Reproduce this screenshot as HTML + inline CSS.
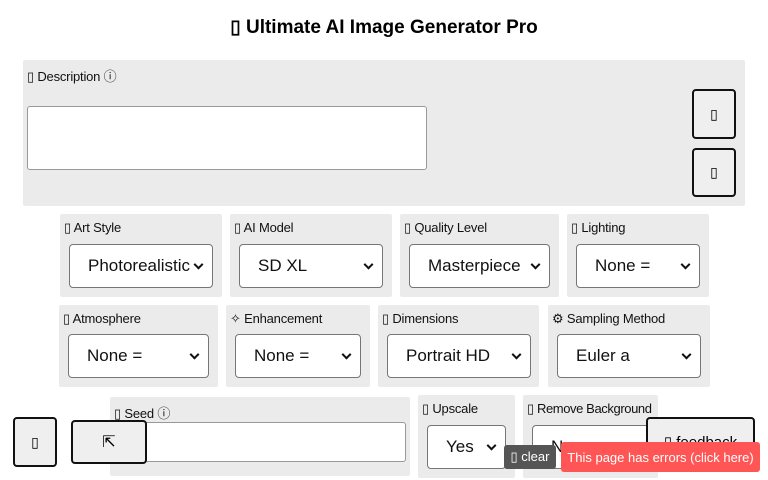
<!DOCTYPE html><html><head><style>
body{margin:0;width:768px;height:480px;overflow:hidden;background:#fff;font-family:"Liberation Sans",sans-serif;position:relative}
.a{position:absolute;box-sizing:border-box}
.p{background:#ebebeb;border-radius:2px}
.l{font-size:13px;color:#111;letter-spacing:-0.2px}
.s{background:#fff;border:1px solid #767676;border-radius:4px;font-size:17px;color:#111;display:flex;align-items:center;padding-left:18px;padding-right:30px;overflow:hidden;white-space:nowrap}
.s:after{content:"";position:absolute;right:10px;top:50%;width:5px;height:5px;border-right:2px solid #111;border-bottom:2px solid #111;transform:translateY(-70%) rotate(45deg)}
.b{background:#efefef;border:2px solid #111;border-radius:4px;display:flex;align-items:center;justify-content:center;font-size:14px}
</style></head><body>
<div class="a" style="left:0;top:16px;width:768px;text-align:center;font-size:19px;font-weight:bold">▯ Ultimate AI Image Generator Pro</div>
<div class="a p" style="left:23px;top:60px;width:722px;height:146px"></div>
<div class="a l" style="left:27px;top:66px">▯ Description ⓘ</div>
<div class="a" style="left:27px;top:106px;width:400px;height:64px;background:#fff;border:1px solid #999;border-radius:3px"></div>
<div class="a b" style="left:692px;top:89px;width:44px;height:50px">▯</div>
<div class="a b" style="left:692px;top:148px;width:44px;height:49px">▯</div>

<div class="a p" style="left:60px;top:214px;width:162px;height:83px"></div><div class="a l" style="left:64px;top:220px">▯ Art Style</div><div class="a s" style="left:69px;top:244px;width:144px;height:44px">Photorealistic</div>
<div class="a p" style="left:230px;top:214px;width:162px;height:83px"></div><div class="a l" style="left:234px;top:220px">▯ AI Model</div><div class="a s" style="left:239px;top:244px;width:144px;height:44px">SD XL</div>
<div class="a p" style="left:400px;top:214px;width:159px;height:83px"></div><div class="a l" style="left:404px;top:220px">▯ Quality Level</div><div class="a s" style="left:409px;top:244px;width:141px;height:44px">Masterpiece</div>
<div class="a p" style="left:567px;top:214px;width:142px;height:83px"></div><div class="a l" style="left:571px;top:220px">▯ Lighting</div><div class="a s" style="left:576px;top:244px;width:124px;height:44px">None =</div>

<div class="a p" style="left:59px;top:305px;width:159px;height:82px"></div><div class="a l" style="left:63px;top:311px">▯ Atmosphere</div><div class="a s" style="left:68px;top:334px;width:141px;height:44px">None =</div>
<div class="a p" style="left:226px;top:305px;width:144px;height:82px"></div><div class="a l" style="left:230px;top:311px">✧ Enhancement</div><div class="a s" style="left:235px;top:334px;width:126px;height:44px">None =</div>
<div class="a p" style="left:378px;top:305px;width:161px;height:82px"></div><div class="a l" style="left:382px;top:311px">▯ Dimensions</div><div class="a s" style="left:387px;top:334px;width:144px;height:44px">Portrait HD</div>
<div class="a p" style="left:548px;top:305px;width:162px;height:82px"></div><div class="a l" style="left:552px;top:311px">⚙ Sampling Method</div><div class="a s" style="left:557px;top:334px;width:144px;height:44px">Euler a</div>

<div class="a p" style="left:110px;top:397px;width:300px;height:79px"></div><div class="a l" style="left:114px;top:403px">▯ Seed ⓘ</div>
<div class="a" style="left:115px;top:422px;width:291px;height:40px;background:#fff;border:1px solid #999;border-radius:3px"></div>
<div class="a p" style="left:418px;top:395px;width:97px;height:83px"></div><div class="a l" style="left:422px;top:401px">▯ Upscale</div><div class="a s" style="left:427px;top:425px;width:79px;height:44px">Yes</div>
<div class="a p" style="left:523px;top:395px;width:135px;height:83px"></div><div class="a l" style="left:527px;top:401px;letter-spacing:-0.4px">▯ Remove Background</div><div class="a s" style="left:532px;top:425px;width:120px;height:44px">No</div>
<div class="a b" style="left:13px;top:417px;width:44px;height:50px">▯</div>
<div class="a b" style="left:71px;top:420px;width:76px;height:44px;font-size:16px">⇱</div>
<div class="a b" style="left:646px;top:417px;width:109px;height:50px;font-size:15px">▯ feedback</div>
<div class="a" style="left:504px;top:445px;width:52px;height:24px;background:#555;color:#fff;font-size:13px;border-radius:3px;display:flex;align-items:center;justify-content:center">▯ clear</div>
<div class="a" style="left:561px;top:442px;width:199px;height:30px;background:#f55;color:#fff;font-size:13px;border-radius:3px;display:flex;align-items:center;justify-content:center">This page has errors (click here)</div>
</body></html>
